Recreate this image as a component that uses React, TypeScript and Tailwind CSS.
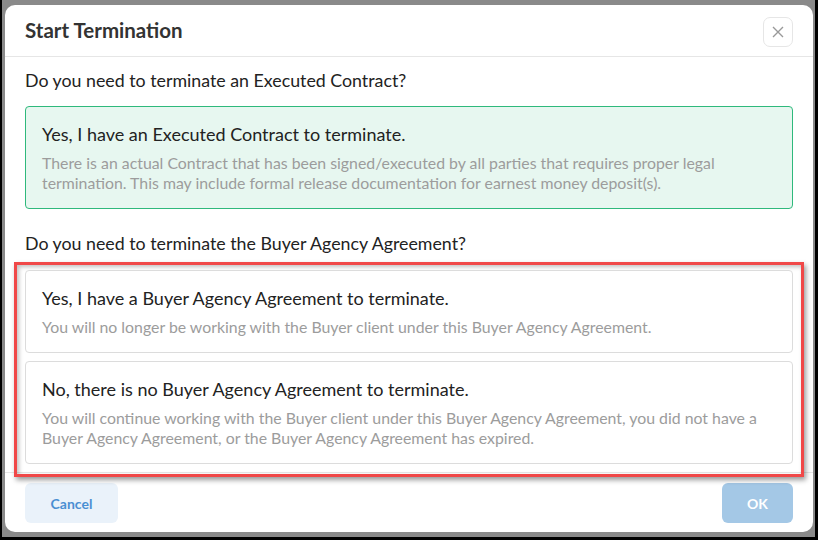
import React from 'react';

const font = { fontFamily: 'Lato, "Open Sans", sans-serif' };

function Option({ title, lines, selected }: { title: string; lines: string; selected?: boolean }) {
  return (
    <div
      className={
        'rounded-[4px] border px-4 py-[15px] ' +
        (selected ? 'border-[#2fb97c] bg-[#e7f7f0]' : 'border-[#dcdcdc] bg-white')
      }
    >
      <div className="text-[18px] leading-[24px] text-[#222]">{title}</div>
      <div className="mt-[7px] text-[15.85px] leading-[20px] text-[#9c9c9c]">{lines}</div>
    </div>
  );
}

function App() {
  return (
    <div
      className="flex h-[540px] w-[818px] border-b-[3px] border-l-[2px] border-r-[3px] border-black bg-[#8a8a8a] pb-[5px] pl-[3px] pr-[2px] pt-[5px]"
      style={font}
    >
      <div className="flex flex-1 flex-col overflow-hidden rounded-[10px] bg-white">
        <div className="flex h-[52px] shrink-0 items-center justify-between border-b border-[#e6e6e6] pl-[20px] pr-[20px]">
          <h2 className="text-[20.5px] font-bold text-[#333]">Start Termination</h2>
          <button className="mt-[2px] flex h-[30px] w-[30px] items-center justify-center rounded-[7px] border border-[#e6e6e6] bg-white">
            <svg width="12" height="12" viewBox="0 0 12 12" fill="none" stroke="#999" strokeWidth="1.4">
              <path d="M1 1L11 11M11 1L1 11" />
            </svg>
          </button>
        </div>

        <div className="flex min-h-0 flex-1 flex-col px-[20px] pt-[11px]">
          <p className="text-[17.8px] leading-[24px] text-[#222]">Do you need to terminate an Executed Contract?</p>
          <div className="mt-[14px]">
            <Option
              selected
              title="Yes, I have an Executed Contract to terminate."
              lines="There is an actual Contract that has been signed/executed by all parties that requires proper legal termination. This may include formal release documentation for earnest money deposit(s)."
            />
          </div>
          <p className="mt-[22px] text-[17.8px] leading-[24px] text-[#222]">
            Do you need to terminate the Buyer Agency Agreement?
          </p>
          <div className="relative z-10 -mx-[11px] mt-[7px] flex shrink-0 flex-col gap-[8px] border-[3px] border-[#f04848] px-[8px] pb-[10px] pt-[5px] shadow-[inset_2px_2px_4px_rgba(0,0,0,0.25),2px_3px_5px_rgba(0,0,0,0.4)]">
            <Option
              title="Yes, I have a Buyer Agency Agreement to terminate."
              lines="You will no longer be working with the Buyer client under this Buyer Agency Agreement."
            />
            <Option
              title="No, there is no Buyer Agency Agreement to terminate."
              lines="You will continue working with the Buyer client under this Buyer Agency Agreement, you did not have a Buyer Agency Agreement, or the Buyer Agency Agreement has expired."
            />
          </div>
        </div>

        <div className="flex shrink-0 items-center justify-between border-t border-[#e6e6e6] px-[20px] pb-[9px] pt-[10px]">
          <button className="h-[40px] w-[93px] rounded-[6px] bg-[#eaf2fa] text-[14px] font-bold text-[#4a8fd2]">
            Cancel
          </button>
          <button className="h-[40px] w-[71px] rounded-[6px] bg-[#a4c8e6] text-[14px] font-bold text-white">
            OK
          </button>
        </div>
      </div>
    </div>
  );
}

export default App;
